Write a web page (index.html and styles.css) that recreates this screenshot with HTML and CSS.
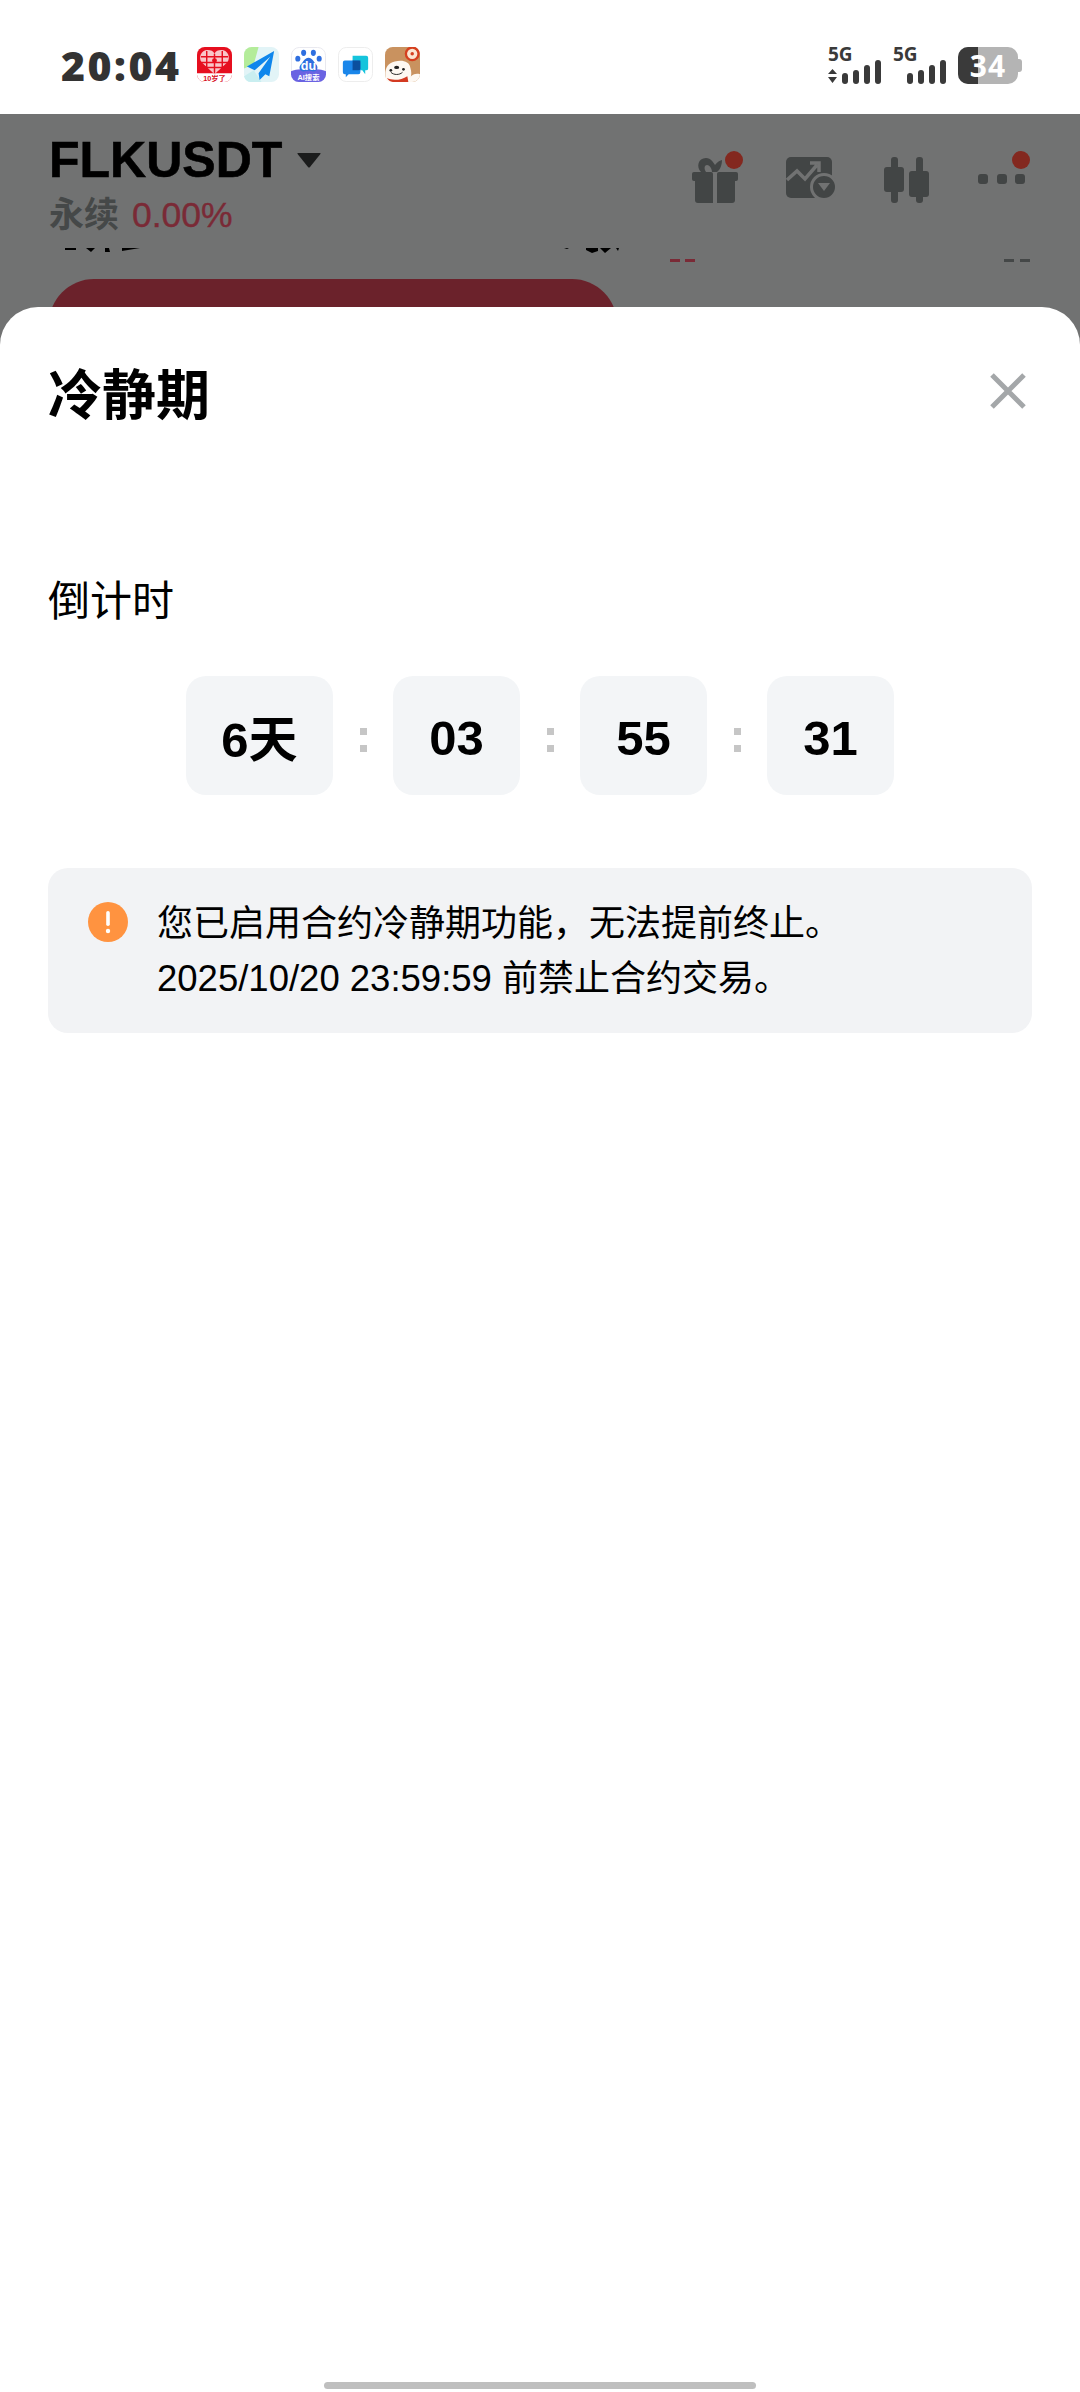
FILE: index.html
```html
<!DOCTYPE html>
<html lang="zh-CN">
<head>
  <meta charset="UTF-8">
  <meta name="viewport" content="width=device-width, initial-scale=1.0">
  <title>冷静期</title>
  <link rel="stylesheet" href="styles.css">
</head>
<body>
  <div class="status-bar">
    <div class="time">20:04</div>
    <div class="notifs">
      <svg class="notif" viewBox="0 0 36 36">
        <rect width="36" height="36" rx="8" fill="#e60f1f"/>
        <path d="M0 27h36v1a8 8 0 0 1-8 8H8a8 8 0 0 1-8-8z" fill="#fff"/>
        <path d="M18 28 5 16c-4-5-1-13 6-13 3 0 6 1 7 4 1-3 4-4 7-4 7 0 10 8 6 13z" fill="#f9c6c9"/>
        <path d="M18 7v20M10 4v17M26 4v17M4 10h28M3 16h30M8 21h20" stroke="#e60f1f" stroke-width="1.500" fill="none"/>
        <circle cx="18" cy="14" r="2.500" fill="#e60f1f"/>
        <text x="18" y="35" text-anchor="middle" class="notif-text" fill="#d7101f">10岁了</text>
      </svg>
      <svg class="notif" viewBox="0 0 36 36">
        <rect width="36" height="36" rx="8" fill="#e2f4f7"/>
        <path d="M0 8a8 8 0 0 1 8-8h7L10 18 0 22z" fill="#b4ec9a"/>
        <path d="M0 30l10-6 8 12H8a8 8 0 0 1-8-6z" fill="#c9eef0"/>
        <path d="M31 4 3 20l8 4L27 10 15 27l1 7 6-6 4 2z" fill="#0f86ec"/>
      </svg>
      <svg class="notif" viewBox="0 0 36 36">
        <rect x=".5" y=".5" width="35" height="35" rx="8" fill="#fff" stroke="#e8e8ee"/>
        <path d="M0 25c6-3 30-3 36 0v3a8 8 0 0 1-8 8H8a8 8 0 0 1-8-8z" fill="#6a63e2"/>
        <ellipse cx="13" cy="6" rx="2.600" ry="3.200" fill="#2f6fe0"/>
        <ellipse cx="23" cy="6" rx="2.600" ry="3.200" fill="#2f6fe0"/>
        <ellipse cx="7" cy="12" rx="2.600" ry="3" fill="#2f6fe0"/>
        <ellipse cx="29" cy="12" rx="2.600" ry="3" fill="#2f6fe0"/>
        <path d="M18 11c4 0 5 4 8 7 3 4 0 8-4 7-3-.6-5-.6-8 0-4 1-7-3-4-7 3-3 4-7 8-7z" fill="#2f6fe0"/>
        <text x="18" y="24" text-anchor="middle" class="notif-du" fill="#fff">du</text>
        <text x="18" y="33.500" text-anchor="middle" class="notif-text" fill="#fff">AI搜索</text>
      </svg>
      <svg class="notif" viewBox="0 0 36 36">
        <rect x=".5" y=".5" width="35" height="35" rx="8" fill="#fff" stroke="#ececec"/>
        <path d="M15 9h14a2 2 0 0 1 2 2v11a2 2 0 0 1-2 2h-1v4l-3-4H15z" fill="#15c4dc"/>
        <path d="M7 14h14a2 2 0 0 1 2 2v10a2 2 0 0 1-2 2H11l-3 3v-3H7a2 2 0 0 1-2-2V16a2 2 0 0 1 2-2z" fill="#1a86ea"/>
        <path d="M15 14h8v8a2 2 0 0 1-2 2h-6z" fill="#0b4f9e"/>
      </svg>
      <svg class="notif" viewBox="0 0 36 36">
        <rect width="36" height="36" rx="8" fill="#c9925f"/>
        <path d="M1 34c-2-9 0-17 9-19 8-2 15 0 16 6 2 6 1 11-2 15H4z" fill="#fdf8f2"/>
        <path d="M22 36c4-6 8-10 14-8a8 8 0 0 1-8 8z" fill="#fdf8f2"/>
        <path d="M2 32c6 3 15 2 21-2l1 6H8a8 8 0 0 1-6-4z" fill="#d33a22"/>
        <circle cx="28" cy="7" r="6.500" fill="#fbe6d2" stroke="#d5401f" stroke-width="2.400"/>
        <circle cx="28" cy="7" r="1.800" fill="#d5401f"/>
        <circle cx="6" cy="24" r="1.400" fill="#222"/>
        <circle cx="19" cy="23" r="1.400" fill="#222"/>
        <ellipse cx="12" cy="21" rx="2.600" ry="1.600" fill="#222"/>
        <path d="M6 26c3 3 9 3 12 0" stroke="#222" stroke-width="1" fill="none"/>
      </svg>
    </div>
    <div class="sys-icons">
      <div class="signal">
        <span class="net">5G</span>
        <svg class="bars" width="57" height="37" viewBox="0 0 57 37">
          <path d="M4.500 22 9 27H0zM4.500 36 0 30h9z" fill="#3a3a3a"/>
          <rect x="14" y="26" width="6" height="11" rx="3" fill="#3a3a3a"/>
          <rect x="25" y="23" width="6" height="14" rx="3" fill="#3a3a3a"/>
          <rect x="36" y="18" width="6" height="19" rx="3" fill="#3a3a3a"/>
          <rect x="47" y="13" width="6" height="24" rx="3" fill="#3a3a3a"/>
        </svg>
      </div>
      <div class="signal">
        <span class="net">5G</span>
        <svg class="bars" width="57" height="37" viewBox="0 0 57 37">
          <rect x="14" y="26" width="6" height="11" rx="3" fill="#3a3a3a"/>
          <rect x="25" y="23" width="6" height="14" rx="3" fill="#3a3a3a"/>
          <rect x="36" y="18" width="6" height="19" rx="3" fill="#3a3a3a"/>
          <rect x="47" y="13" width="6" height="24" rx="3" fill="#3a3a3a"/>
        </svg>
      </div>
      <div class="battery">
        <div class="battery-fill" style="width: 34%"></div>
        <span class="battery-num">34</span>
        <div class="battery-tip"></div>
      </div>
    </div>
  </div>

  <div class="behind">
    <div class="behind-top">
      <div class="symbol">
        <div class="symbol-name">
          <span>FLKUSDT</span>
          <svg width="24" height="16" viewBox="0 0 24 16"><path d="M1 1h22q1 0 .4 1L13 15q-1 1-2 0L.6 2Q0 1 1 1z" fill="#1b1c1c"/></svg>
        </div>
        <div class="symbol-sub"><span class="perp">永续</span><span class="rate">0.00%</span></div>
      </div>
      <div class="actions">
        <div class="action">
          <svg width="46" height="46" viewBox="0 0 46 46" fill="#424545">
            <path d="M9 15C4 10 6 1 14 1c5 0 7 4 9 7 2-2 3-4 7-5 0 5-2 10-5 12h-5c0-3-2-7-5-7-3 0-3 4-1 7z"/>
            <rect x="0" y="15" width="21" height="9" rx="2"/>
            <rect x="25" y="15" width="21" height="9" rx="2"/>
            <path d="M3 22h18v24H6a3 3 0 0 1-3-3zM25 22h18v21a3 3 0 0 1-3 3H25z"/>
          </svg>
          <span class="dot"></span>
        </div>
        <div class="action">
          <svg width="50" height="42" viewBox="0 0 50 42">
            <rect x="0" y="0" width="46" height="41" rx="5" fill="#424545"/>
            <path d="M1 23l10-9 8 8 12-14M24 6h9v9" stroke="#717272" stroke-width="3.500" fill="none"/>
            <circle cx="38" cy="30" r="12.500" fill="#424545" stroke="#717272" stroke-width="3"/>
            <path d="M32 26h12l-6 8z" fill="#717272"/>
          </svg>
        </div>
        <div class="action">
          <svg width="46" height="46" viewBox="0 0 46 46" fill="#424545">
            <rect x="7" y="0" width="7" height="46" rx="3"/>
            <rect x="0" y="10" width="20" height="25" rx="3"/>
            <rect x="32" y="0" width="7" height="46" rx="3"/>
            <rect x="25" y="14" width="20" height="26" rx="3"/>
          </svg>
        </div>
        <div class="action">
          <svg width="48" height="46" viewBox="0 0 48 46" fill="#424545">
            <rect x="0" y="17" width="10" height="10" rx="3"/>
            <rect x="19" y="17" width="10" height="10" rx="3"/>
            <rect x="37" y="17" width="10" height="10" rx="3"/>
          </svg>
          <span class="dot dot-more"></span>
        </div>
      </div>
    </div>
    <svg class="scraps" width="1080" height="20" viewBox="0 0 1080 20">
      <path d="M65 2h11v2H65zM86 2h9l-4 4zM105 2h4l1 4h-5zM122 2h18l-18 3zM564 2h5l-2 1zM586 2h12v3l-6 2-6-3zM600 2h11l-6 5zM616 2h3l-1 3z" fill="#000"/>
      <path d="M670 13h10v3h-10zM685 13h10v3h-10z" fill="#7a2a36"/>
      <path d="M1004 13h10v3h-10zM1020 13h10v3h-10z" fill="#444747"/>
    </svg>
    <div class="red-btn"></div>
  </div>

  <div class="sheet">
    <div class="sheet-head">
      <h2 class="sheet-title">冷静期</h2>
      <svg class="close" width="38" height="38" viewBox="0 0 38 38"><path d="M3 3l32 32M35 3 3 35" stroke="#a4a7a9" stroke-width="5" fill="none"/></svg>
    </div>
    <div class="count-label">倒计时</div>
    <div class="countdown">
      <div class="cell cell-day">6天</div>
      <div class="sep"></div>
      <div class="cell">03</div>
      <div class="sep"></div>
      <div class="cell">55</div>
      <div class="sep"></div>
      <div class="cell">31</div>
    </div>
    <div class="note">
      <svg class="note-icon" width="40" height="40" viewBox="0 0 40 40">
        <circle cx="20" cy="20" r="20" fill="#ff9340"/>
        <rect x="18.200" y="9" width="3.600" height="15" rx="1.800" fill="#fff"/>
        <circle cx="20" cy="29" r="2.200" fill="#fff"/>
      </svg>
      <div class="note-text">
        <div>您已启用合约冷静期功能，无法提前终止。</div>
        <div><span class="note-date">2025/10/20 23:59:59</span> 前禁止合约交易。</div>
      </div>
    </div>
    <div class="home-bar"></div>
  </div>
</body>
</html>
```

FILE: styles.css
```css
* {
  box-sizing: border-box;
}
body {
  margin: 0;
  height: 100vh;
  display: flex;
  flex-direction: column;
  background-color: #717272;
  color: #000000;
  font-family: "Liberation Sans", "Noto Sans CJK SC", sans-serif;
  overflow: hidden;
}

/* status bar */
.status-bar {
  height: 114px;
  flex-shrink: 0;
  background-color: #ffffff;
  display: flex;
  align-items: flex-start;
  padding: 47px 62px 0 61px;
}
.time {
  font-family: "Open Sans", sans-serif;
  font-weight: 800;
  font-size: 41px;
  line-height: 36px;
  letter-spacing: 2.5px;
  color: #333333;
  width: 136px;
}
.notifs {
  display: flex;
  gap: 12px;
}
.notif {
  width: 35px;
  height: 35px;
}
.notif-text {
  font-size: 7.500px;
  font-weight: 700;
}
.notif-du {
  font-size: 13px;
  font-weight: 700;
}
.sys-icons {
  margin-left: auto;
  display: flex;
  align-items: flex-start;
}
.signal {
  position: relative;
  width: 65px;
  height: 37px;
}
.net {
  position: absolute;
  left: 0;
  top: -2px;
  font-family: "Open Sans", sans-serif;
  font-size: 19px;
  line-height: 19px;
  font-weight: 700;
  color: #3a3a3a;
}
.bars {
  display: block;
}
.battery {
  position: relative;
  width: 60px;
  height: 37px;
  border-radius: 10px;
  background-color: #b4b4b4;
  display: flex;
  align-items: center;
  justify-content: center;
}
.battery-fill {
  position: absolute;
  left: 0;
  top: 0;
  bottom: 0;
  background-color: #3a3a3a;
  border-radius: 10px 0 0 10px;
}
.battery-num {
  position: relative;
  font-family: "Open Sans", sans-serif;
  font-size: 30px;
  font-weight: 700;
  color: #ffffff;
  line-height: 35px;
  letter-spacing: 1px;
}
.battery-tip {
  position: absolute;
  right: -4px;
  top: 12px;
  width: 4px;
  height: 13px;
  background-color: #b4b4b4;
  border-radius: 0 3px 3px 0;
}

/* dimmed page behind the sheet */
.behind {
  height: 193px;
  flex-shrink: 0;
  overflow: hidden;
}
.behind-top {
  height: 130px;
  display: flex;
  justify-content: space-between;
  padding: 18px 54px 0 49px;
}
.symbol-name {
  display: flex;
  align-items: center;
  gap: 15px;
  font-size: 50px;
  font-weight: 700;
  line-height: 56px;
  color: #000000;
  -webkit-text-stroke: 0.6px #000000;
}
.symbol-sub {
  display: flex;
  align-items: center;
  gap: 13px;
  margin-top: 4px;
  line-height: 46px;
}
.perp {
  font-size: 35px;
  font-weight: 700;
  color: #454848;
}
.rate {
  font-size: 35.500px;
  color: #7a2a36;
  -webkit-text-stroke: 0.4px #7a2a36;
}
.actions {
  display: flex;
  gap: 48px;
  padding-top: 25px;
}
.action {
  position: relative;
  height: 46px;
}
.action svg {
  display: block;
}
.dot {
  position: absolute;
  right: -5px;
  top: -6px;
  width: 18px;
  height: 18px;
  border-radius: 50%;
  background-color: #83281f;
}
.dot-more {
  right: -4px;
}
.scraps {
  display: block;
  margin-top: 2px;
}
.red-btn {
  width: 568px;
  height: 90px;
  margin: 13px 0 0 49px;
  border-radius: 50px;
  background-color: #6b222b;
}

/* cool-down sheet */
.sheet {
  flex: 1;
  background-color: #ffffff;
  border-radius: 38px 38px 0 0;
  display: flex;
  flex-direction: column;
}
.sheet-head {
  height: 174px;
  padding: 59px 53px 0 48px;
  display: flex;
  justify-content: space-between;
  align-items: flex-start;
}
.sheet-title {
  margin: 0;
  font-size: 54px;
  font-weight: 700;
  line-height: 60px;
}
.close {
  margin-top: 6px;
}
.count-label {
  margin: 91px 0 0 48px;
  font-size: 42px;
  line-height: 60px;
  font-weight: 400;
}
.countdown {
  margin-top: 44px;
  display: flex;
  justify-content: center;
}
.cell {
  width: 127px;
  height: 119px;
  padding-top: 4px;
  border-radius: 20px;
  background-color: #f3f5f7;
  display: flex;
  align-items: center;
  justify-content: center;
  font-size: 49px;
  font-weight: 700;
}
.cell-day {
  width: 147px;
  padding-top: 0;
}
.sep {
  width: 60px;
  padding-top: 8px;
  display: flex;
  flex-direction: column;
  align-items: center;
  justify-content: center;
  gap: 10px;
}
.sep::before,
.sep::after {
  content: "";
  width: 7px;
  height: 7px;
  background-color: #c6c6c6;
}
.note {
  margin: 73px 48px 0;
  padding: 28px 40px 0;
  height: 165px;
  border-radius: 20px;
  background-color: #f2f3f5;
  display: flex;
  gap: 29px;
  align-items: flex-start;
}
.note-icon {
  flex-shrink: 0;
  margin-top: 6px;
}
.note-text {
  font-size: 36px;
  line-height: 55px;
  white-space: nowrap;
}
.note-date {
  font-size: 36.500px;
}
.home-bar {
  width: 432px;
  height: 7px;
  margin: auto auto 3px;
  border-radius: 4px;
  background-color: #bfbfbf;
}
```
